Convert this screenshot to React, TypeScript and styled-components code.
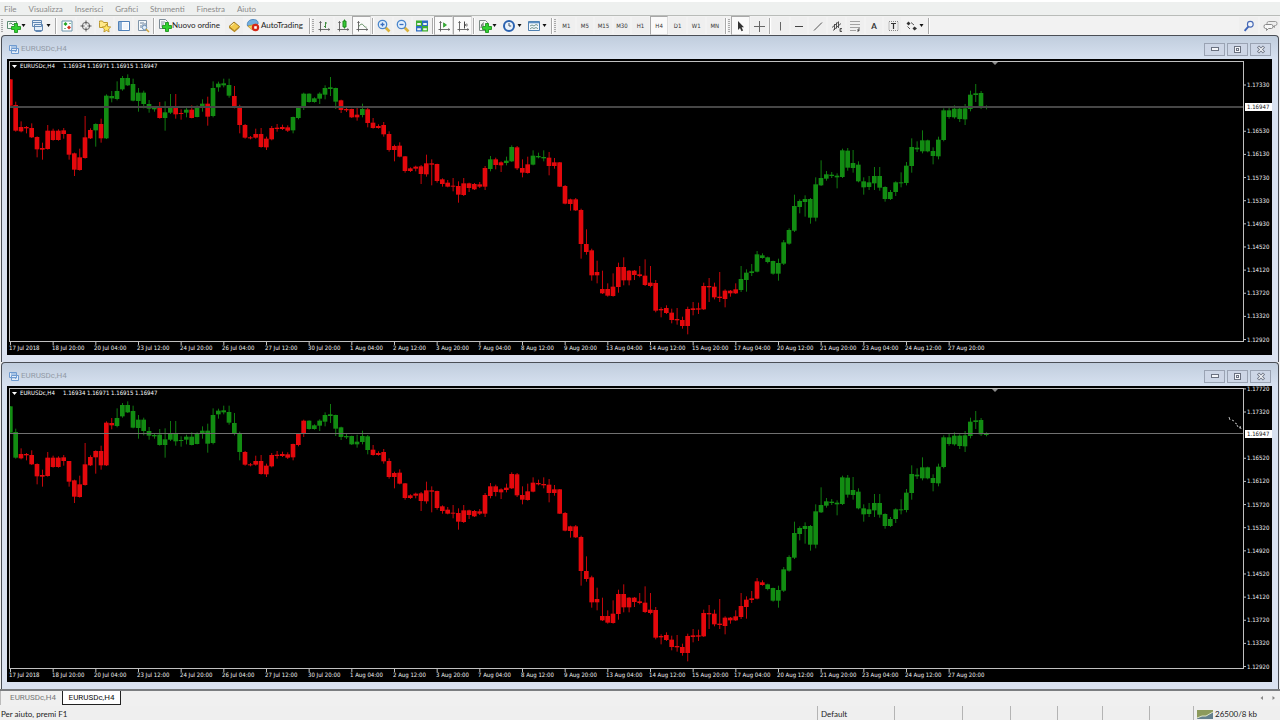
import React from "react";
import styled, { createGlobalStyle } from "styled-components";

const UI = '"Lato", "Noto Sans", sans-serif';
const TITLE = '"Roboto", "Noto Sans", sans-serif';
const CHART = '"DejaVu Sans Condensed", "Noto Sans", sans-serif';
const RED = "#e4080c";
const GREEN = "#128c12";

const Global = createGlobalStyle`
  * { box-sizing: border-box; }
  body { margin: 0; background: #f0f0f0; font-family: ${UI}; color: #222; }
  button { font-family: inherit; color: inherit; cursor: default; }
`;

const Terminal = styled.div`
  display: flex;
  flex-direction: column;
  min-height: 100vh;
`;

const MenuBar = styled.nav`
  display: flex;
  align-items: center;
  height: 16px;
  padding-left: 4px;
  gap: 12px;
  border-top: 2px solid #fff;
  border-bottom: 1px solid #b9bcb9;
  background: #eef0ef;
`;

const MenuItem = styled.button`
  border: 0;
  padding: 0;
  background: none;
  font-size: 8px;
  line-height: 12px;
  color: #8a8a8a;
`;

const Toolbar = styled.div`
  display: flex;
  align-items: stretch;
  height: 19px;
  background: #f2f2f2;
`;

const Group = styled.div<{ $w: number }>`
  display: flex;
  width: ${(p) => p.$w}px;
`;

const Tool = styled.button<{ $on?: boolean }>`
  display: flex;
  flex: 1 1 0;
  align-items: center;
  justify-content: center;
  min-width: 0;
  padding: 0;
  border: 1px solid transparent;
  ${(p) => p.$on && "border-color: #a8a8a8 #ddd #ddd #a8a8a8; background: #fafafa;"}
  background-clip: padding-box;
  font: 6px/10px ${CHART};
  color: #333;
`;

const LetterTool = styled(Tool)`
  font: bold 8px/10px ${UI};
`;

const DropTool = styled.button`
  display: flex;
  align-items: center;
  width: 25px;
  padding: 0 3px 0 1px;
  border: 0;
  background: none;
`;

const TextTool = styled.button<{ $w: number }>`
  display: flex;
  align-items: center;
  width: ${(p) => p.$w}px;
  padding: 0 0 1px 1px;
  border: 0;
  background: none;
  font-size: 8px;
  color: #1c1c1c;
  white-space: nowrap;
`;

const Sep = styled.i`
  width: 3px;
  border-left: 1px solid transparent;
  border-right: 1px solid #fff;
  background: #a9a9a9;
  background-clip: padding-box;
  margin: 2px 0 1px;
`;

const Grip = styled.i`
  width: 4px;
  margin: 3px 0 2px;
  border-left: 1px solid transparent;
  border-right: 1px solid transparent;
  background: repeating-linear-gradient(#aaa 0 1px, #eee 1px 2px);
  background-clip: padding-box;
`;

const Spacer = styled.div`
  flex: 1;
`;

const Svg = styled.svg`
  display: block;
  flex: none;
  overflow: visible;
`;

const ChartWindow = styled.section`
  margin: 0 1px;
  height: 327px;
  padding: 0 6px 7px 5px;
  border: 1px solid #4a4e55;
  border-bottom: 0;
  border-radius: 4px 4px 0 0;
  background: linear-gradient(#c0cddd, #d7e1f0 23px, #dbe2f0);
`;

const TitleBar = styled.header`
  display: flex;
  align-items: center;
  height: 23px;
  gap: 2px;
  padding: 3px 1px 0 1px;
`;

const Title = styled.h2`
  flex: 1;
  margin: 0;
  font: 8px/12px ${TITLE};
  color: #929aa6;
`;

const WinButton = styled.button`
  display: flex;
  align-items: center;
  justify-content: center;
  width: 21px;
  height: 13px;
  padding: 0;
  border: 1px solid #9aa3b3;
  background: #cdd6e6;
`;

const ChartArea = styled.div`
  display: grid;
  grid-template-columns: minmax(0, 1fr) 28px;
  height: 296px;
  padding: 2px 0 0 2px;
  background: #000;
`;

const Plot = styled.div`
  position: relative;
  height: 281px;
  border: 1px solid #c0c0c0;
  overflow: hidden;
`;

const PriceLine = styled.div<{ $soft: boolean }>`
  position: absolute;
  left: 0;
  right: 0;
  top: 44px;
  height: ${(p) => (p.$soft ? 2 : 1)}px;
  background: ${(p) => (p.$soft ? "#464646" : "#707070")};
`;

const Caption = styled.div`
  position: absolute;
  left: 2px;
  top: 0;
  display: flex;
  align-items: center;
  gap: 3px;
  height: 8px;
  font: 6px/8px ${CHART};
  color: #fff;
`;

const Symbol = styled.span`
  width: 40px;
`;

const ShiftMark = styled.i`
  position: absolute;
  left: 982px;
  top: 0;
  border: 3px solid transparent;
  border-top-color: #8c8c8c;
  border-bottom: 0;
`;

const Pointer = styled.svg`
  position: absolute;
  right: 0;
  top: 26px;
`;

const Tabs = styled.div`
  display: flex;
  align-items: flex-start;
  height: 17px;
  border-top: 2px solid #7b7d80;
  background: #f0f0f0;
`;

const Tab = styled.button<{ $on?: boolean }>`
  width: ${(p) => (p.$on ? 59 : 62)}px;
  height: 14px;
  padding: ${(p) => (p.$on ? "0" : "0 0 0 3px")};
  border: solid ${(p) => (p.$on ? "#222" : "#bbb")};
  border-width: ${(p) => (p.$on ? "0 1px 1px 1px" : "0 0 0 1px")};
  background: ${(p) => (p.$on ? "#fff" : "transparent")};
  font: 8px/12px ${TITLE};
  color: ${(p) => (p.$on ? "#111" : "#777")};
`;

const TabArrow = styled.button`
  width: 12px;
  height: 13px;
  padding: 0;
  border: 0;
  background: none;
`;

const StatusBar = styled.footer`
  display: flex;
  height: 14px;
  background: #efefef;
  font-size: 8px;
  line-height: 12px;
  color: #222;
`;

const StatusCell = styled.div<{ $w?: number }>`
  display: flex;
  align-items: center;
  gap: 2px;
  padding-top: 2px;
  ${(p) => (p.$w ? `width: ${p.$w}px; border-left: 1px solid #b4b4b4; padding-left: 3px;` : "flex: 1; padding-left: 1px;")}
`;

/* Candles, one per H4 bar: high, body top, body bottom, low, in thirds of a pixel. */
const CANDLES = `58,58,137,137 125,135,212,215 184,201,214,217 198,201,205,220 190,204,232,234 229,231,268,292 248,264,269,299 195,212,267,269
206,212,240,242 208,212,240,242 204,211,222,236 222,222,284,299 278,280,329,348 266,292,330,332 168,232,294,296 205,210,235,237
190,192,211,260 176,192,235,248 103,107,235,237 93,108,115,127 64,93,117,121 48,54,88,92 43,54,76,78 56,72,122,124
84,98,123,155 92,98,132,145 120,132,146,158 138,144,148,155 126,143,174,176 124,157,174,212 102,141,158,162 102,141,163,176
148,159,162,179 143,149,158,172 136,149,174,175 136,139,171,172 118,131,139,155 110,131,170,197 64,84,168,172 65,71,82,95
56,70,76,82 56,75,107,113 78,108,140,145 134,140,195,220 192,195,233,236 228,232,235,238 206,222,233,236 204,222,261,263
230,236,262,270 198,204,238,241 192,203,207,215 194,201,207,210 196,202,212,216 170,171,211,220 140,141,174,178 98,101,141,150
100,101,126,128 112,115,126,128 97,101,116,132 76,84,104,118 51,82,87,108 83,84,125,147 119,121,150,159 140,147,151,156
146,147,172,174 143,164,172,182 131,147,165,172 144,148,189,202 174,188,204,206 193,198,204,206 186,195,223,230 214,222,270,275
254,258,270,304 247,257,290,292 288,289,333,338 322,325,333,336 317,320,326,334 315,319,342,372 284,310,343,350 298,310,314,376
311,312,363,368 355,358,372,380 360,368,380,382 354,377,380,394 364,378,404,428 354,370,405,408 368,370,384,396 369,372,388,390
366,373,380,384 318,324,380,390 288,298,327,334 293,298,315,328 304,307,316,336 290,302,309,316 256,261,304,306 258,262,325,330
298,324,338,352 290,313,339,341 271,287,314,316 278,288,292,295 271,291,295,304 276,293,318,346 294,307,318,326 306,307,380,381
375,378,431,433 416,418,432,452 414,418,451,453 446,450,552,596 508,552,576,584 566,571,646,662 602,636,646,670 632,687,700,702
670,687,707,710 640,680,708,710 608,621,681,698 592,621,661,676 630,632,661,676 630,632,645,660 618,643,648,652 598,647,675,678
618,668,678,682 660,669,752,757 742,747,751,772 736,744,759,762 746,758,780,790 744,777,781,794 770,780,798,806 740,747,798,823
726,745,750,766 728,745,749,762 668,678,748,750 654,678,682,726 668,680,712,718 636,710,714,726 688,692,717,742 690,692,700,710
670,688,700,702 618,657,690,696 628,638,660,695 612,634,639,648 573,583,635,637 580,586,594,596 590,592,606,610 602,603,641,644
596,609,641,662 540,547,611,615 505,510,551,554 404,438,512,516 418,423,441,460 406,417,426,470 414,417,473,491 352,373,473,484
301,354,376,378 333,343,356,362 336,344,348,354 340,347,352,385 266,271,351,354 264,272,323,332 270,309,324,338 304,314,364,367
352,364,382,404 348,367,381,390 321,348,370,390 321,348,383,392 379,381,417,425 390,396,417,420 364,367,396,408 337,367,370,382
306,317,369,376 235,261,318,338 244,263,268,276 211,241,274,280 239,241,274,277 262,273,288,313 230,239,289,298 145,151,240,244
140,151,171,176 136,146,172,176 142,146,177,186 132,145,178,195 92,104,147,154 72,100,105,126 93,99,142,147 136,140,144,148`
  .split(/\s+/)
  .map((c) => c.split(",").map(Number));

type Range = [number, number];
const FAST: Range[] = [[16, 16], [18, 27], [29, 30], [33, 33], [35, 36], [38, 41], [53, 61], [66, 66], [90, 90], [93, 94], [98, 100], [137, 183]];
const SLOW: Range[] = [[0, 1], [20, 43], [56, 67], [142, 183]];

const DATES = ["17 Jul 2018", "18 Jul 20:00", "20 Jul 04:00", "23 Jul 12:00", "24 Jul 20:00", "26 Jul 04:00", "27 Jul 12:00", "30 Jul 20:00", "1 Aug 04:00", "2 Aug 12:00", "3 Aug 20:00", "7 Aug 04:00", "8 Aug 12:00", "9 Aug 20:00", "13 Aug 04:00", "14 Aug 12:00", "15 Aug 20:00", "17 Aug 04:00", "20 Aug 12:00", "21 Aug 20:00", "23 Aug 04:00", "24 Aug 12:00", "27 Aug 20:00"];

const LOWER_PRICES = ["1.16530", "1.16130", "1.15730", "1.15330", "1.14930", "1.14520", "1.14120", "1.13720", "1.13320", "1.12920"];
const LOWER_PRICES_2 = ["1.16520", "1.16120", "1.15720", "1.15320", "1.14920", "1.14520", "1.14120", "1.13720", "1.13320", "1.12920"];

function Candles({ green }: { green: Range[] }) {
  return (
    <Svg width="990" height="279" aria-label="EURUSDc candles">
      <g transform="scale(0.33333) translate(0 -6)">
        {CANDLES.map(([hi, top, bottom, lo], i) => {
          const up = green.some(([a, b]) => i >= a && i <= b);
          const x = 1 + 16 * i;
          return (
            <g key={i} fill={up ? GREEN : RED}>
              <rect x={x - 1} y={hi} width="2.6" height={lo - hi} />
              <rect x={x - 7} y={top} width="14" height={bottom - top} />
            </g>
          );
        })}
      </g>
    </Svg>
  );
}

function PriceAxis({ prices }: { prices: [number, string][] }) {
  return (
    <Svg width="28" height="294" fontFamily={CHART} fontSize="6" fill="#f2f2f2">
      {prices.map(([row, p]) => {
        const y = 24 + row * 23.14;
        return (
          <g key={p}>
            <path d={`M0 ${y}h2`} stroke="#c0c0c0" />
            <text x="3" y={y + 2}>{p}</text>
          </g>
        );
      })}
      <rect x="1" y="42" width="27" height="8" fill="#fff" />
      <text x="3" y="48" fill="#111">1.16947</text>
    </Svg>
  );
}

function Chart({ green, prices, soft, pointer }: { green: Range[]; prices: [number, string][]; soft: boolean; pointer?: boolean }) {
  return (
    <ChartWindow>
      <TitleBar>
        <Svg width="11" height="11" viewBox="0 0 11 11" fill="#e6effa" stroke="#6f9bd0">
          <path d="M1.5 1.5h7v5h-7zM3.5 4.5h7v5h-7z" />
          <path d="M3 3h5M5 7.5l1-1 1 1 2-1" fill="none" />
        </Svg>
        <Title>EURUSDc,H4</Title>
        <WinButton aria-label="Riduci"><Svg width="8" height="4"><rect x=".5" y=".5" width="7" height="3" fill="#f4f6fa" stroke="#6a7180" /></Svg></WinButton>
        <WinButton aria-label="Ingrandisci"><Svg width="7" height="7"><rect x=".5" y=".5" width="6" height="6" fill="#f4f6fa" stroke="#6a7180" /><rect x="2.5" y="2.5" width="2" height="2" fill="none" stroke="#6a7180" /></Svg></WinButton>
        <WinButton aria-label="Chiudi"><Svg width="8" height="7"><path d="M1 .5l6 6M7 .5l-6 6" stroke="#6a7180" strokeWidth="3" /><path d="M1.500 1l5 5M6.500 1l-5 5" stroke="#f4f6fa" strokeWidth="1.200" /></Svg></WinButton>
      </TitleBar>
      <ChartArea>
        <div>
          <Plot>
            <PriceLine $soft={soft} />
            <Candles green={green} />
            <Caption>
              <Svg width="5" height="3"><path d="M0 0h5L2.500 3z" fill="#fff" /></Svg>
              <Symbol>EURUSDc,H4</Symbol>
              <span>1.16934 1.16971 1.16915 1.16947</span>
            </Caption>
            <ShiftMark />
            {pointer && (
              <Pointer width="15" height="15" stroke="#b5b5b5" fill="none"><path d="M1 2l1 3M4 5l2 1M7 8l2 1M9 10l1 2M11 13l2-1M12 11l1 3" /></Pointer>
            )}
          </Plot>
          <Svg width="1000" height="13" fontFamily={CHART} fontSize="6" fill="#f2f2f2">
            {DATES.map((d, k) => (
              <g key={d}>
                <path d={`M${1.5 + (k * 128) / 3} -1v4`} stroke="#c0c0c0" />
                <text x={Math.round((k * 128) / 3)} y="8">{d}</text>
              </g>
            ))}
          </Svg>
        </div>
        <PriceAxis prices={prices} />
      </ChartArea>
    </ChartWindow>
  );
}

const Ico = ({ children, s = 16 }: { children: React.ReactNode; s?: number }) => (
  <Svg width={s} height={s} viewBox="0 0 16 16" fill="none" aria-hidden="true">{children}</Svg>
);
const Caret = () => <Svg width="5" height="3"><path d="M.5 0h4L2.500 3z" fill="#111" /></Svg>;
const Plus = () => <path d="M9.500 5.500h3v3h3v3h-3v3h-3v-3h-3v-3h3z" fill="#2fd12f" stroke="#128a12" strokeWidth=".8" />;
const Axes = () => <path d="M4.500 3.500v10M2.500 11.500h11M3.500 5l1-1.500 1 1.500M12.300 10.500l1.500 1-1.500 1" stroke="#5a5a5a" strokeWidth=".9" />;

const Lens = ({ minus }: { minus?: boolean }) => (
  <Ico>
    <path d="M9.500 9.500l4 4" stroke="#d9b23c" strokeWidth="2.600" />
    <circle cx="6.500" cy="6.500" r="4.200" fill="#e4f1fd" stroke="#4a86cc" strokeWidth="1.300" />
    <path d={minus ? "M4.500 6.500h4" : "M4.500 6.500h4M6.500 4.500v4"} stroke="#3a6fc0" strokeWidth="1.300" />
  </Ico>
);

export default function App() {
  const frames = ["M1", "M5", "M15", "M30", "H1", "H4", "D1", "W1", "MN"];
  const upper: [number, string][] = [[0, "1.17330"], ...LOWER_PRICES.map((p, i): [number, string] => [i + 2, p])];
  const lower: [number, string][] = [[-1, "1.17720"], [0, "1.17320"], ...LOWER_PRICES_2.map((p, i): [number, string] => [i + 2, p])];
  return (
    <Terminal>
      <Global />
      <MenuBar>
        {["File", "Visualizza", "Inserisci", "Grafici", "Strumenti", "Finestra", "Aiuto"].map((m) => <MenuItem key={m}>{m}</MenuItem>)}
      </MenuBar>
      <Toolbar>
        <Grip />
        <DropTool aria-label="Nuovo grafico">
          <Ico><path d="M2.500 3.500h9v7h-9z" fill="#f4faf4" stroke="#5e8c74" /><path d="M4 6l2-1 2 2 2-2" stroke="#5e8c74" /><Plus /></Ico><Caret />
        </DropTool>
        <DropTool aria-label="Profili">
          <Ico><path d="M2.500 2.500h9v6h-9zM4.500 6.500h8v6h-8z" fill="#e6eff9" stroke="#6288b3" /><path d="M3 4.500h8M5.500 13.500h6M6 8.500h5" stroke="#6288b3" /></Ico><Caret />
        </DropTool>
        <Sep />
        <Group $w={95}>
          <Tool aria-label="Market"><Ico><path d="M3 3h10v10H3z" fill="#fff" stroke="#6c96ad" /><path d="M4.500 6l2-2 2 2-2 2z" fill="#22a522" /><path d="M8 9.500l2-2 2 2-2 2z" fill="#d43020" /><path d="M5 10.500h2M10 5.500h2" stroke="#7cba94" /></Ico></Tool>
          <Tool aria-label="Finestra dati"><Ico><circle cx="8" cy="8" r="3.700" stroke="#666" /><path d="M8 2.500v4M8 9.500v4M2.500 8h4M9.500 8h4" stroke="#555" /></Ico></Tool>
          <Tool aria-label="Navigatore"><Ico><path d="M2.500 4.500V3h3l1 1.500h4v5h-8z" fill="#ffe98a" stroke="#bd9a30" /><path d="M9.500 6l1.300 2.600 2.900.4-2.100 2 .5 2.900-2.600-1.400-2.600 1.400.5-2.900-2.100-2 2.900-.4z" fill="#ffe566" stroke="#b28a20" strokeWidth=".8" /></Ico></Tool>
          <Tool aria-label="Terminale"><Ico><path d="M2.500 3.500h11v9h-11z" fill="#fdfeff" stroke="#4f80b8" /><path d="M3 4h3v8H3z" fill="#8fb2d8" /><path d="M7 6h5M7 8h5M7 10h5" stroke="#dde6f0" strokeWidth=".7" /></Ico></Tool>
          <Tool aria-label="Strategy Tester"><Ico><path d="M3.500 2.500h8v10h-8z" fill="#f4f8fb" stroke="#7f95aa" /><path d="M5 5h2M8 4v4M6 7v3M10 5v3" stroke="#68809a" /><circle cx="9.500" cy="9.500" r="2.200" fill="#e3effa" stroke="#6d92b8" /><path d="M11 11l3 3" stroke="#cfa53a" strokeWidth="1.500" /></Ico></Tool>
        </Group>
        <Sep />
        <TextTool $w={69}>
          <Ico><path d="M3.500 2.500h6l2 2v7h-8z" fill="#f5f8fa" stroke="#7d8b96" /><path d="M5 5h4M5 7h3M5 9h2" stroke="#8b98a3" /><Plus /></Ico>Nuovo ordine
        </TextTool>
        <Group $w={20}>
          <Tool aria-label="MetaEditor"><Ico><path d="M3 8.500L8 4l5.500 4.500-5 4.500z" fill="#f3ca4c" stroke="#94701c" strokeWidth=".9" /><path d="M3 8.500v1.500l5.500 4.200 5-4.400V8.500l-5 4.200z" fill="#b88a20" /><path d="M5 8L8 5.500" stroke="#fff3b8" /></Ico></Tool>
        </Group>
        <TextTool $w={64}>
          <Ico><path d="M2.500 9c-1-4 2-6.500 5.500-6.500S13.500 4 13 7c-3 1.500-7 2.500-10.500 2z" fill="#72afe0" stroke="#3d7ab5" strokeWidth=".8" /><path d="M3 9c2 3 5 5 9 3l-.5-5z" fill="#f1cf5e" stroke="#b98e2a" strokeWidth=".7" /><circle cx="10.500" cy="10.500" r="3.700" fill="#d42818" /><path d="M9.200 9.200h2.600v2.600H9.200z" fill="#fff" /></Ico>AutoTrading
        </TextTool>
        <Sep />
        <Grip />
        <Group $w={56}>
          <Tool aria-label="Barre"><Ico><Axes /><path d="M9.500 4v6M8 8.500h1.500M9.500 5H11" stroke="#3f8a3f" /></Ico></Tool>
          <Tool aria-label="Candele"><Ico><Axes /><path d="M9.500 1.500v9" stroke="#1c8a1c" /><path d="M8 3h3v6H8z" fill="#35c835" stroke="#1c8a1c" /></Ico></Tool>
          <Tool aria-label="Linea" $on><Ico><Axes /><path d="M5 8.500c1.500-3 3.500-3 5-.5.8 1.200 1.500 1.200 2.500 1.200" stroke="#5a8a5a" /></Ico></Tool>
        </Group>
        <Sep />
        <Group $w={57}>
          <Tool aria-label="Ingrandisci"><Lens /></Tool>
          <Tool aria-label="Rimpicciolisci"><Lens minus /></Tool>
          <Tool aria-label="Affianca"><Ico><path d="M2 2.500h6v5.500H2zM8 8h6v5.500H8z" fill="#3fae32" /><path d="M8 2.500h6V8H8zM2 8h6v5.500H2z" fill="#2c6cc4" /><path d="M3.200 5h3.600v2H3.200zM9.200 5h3.600v2H9.200zM3.200 10.300h3.600v2H3.200zM9.200 10.300h3.600v2H9.200z" fill="#eef6ee" /></Ico></Tool>
        </Group>
        <Sep />
        <Group $w={38}>
          <Tool aria-label="Scorrimento" $on><Ico><Axes /><path d="M7.500 4.800v4.400L10.500 7z" fill="#31b431" stroke="#1c8a1c" strokeWidth=".6" /></Ico></Tool>
          <Tool aria-label="Spostamento" $on><Ico><Axes /><path d="M9.500 3.500v7" stroke="#444" strokeWidth="1" /><path d="M13 7h-3M11.700 5.500L10.200 7l1.500 1.500" stroke="#666" strokeWidth=".9" /></Ico></Tool>
        </Group>
        <Sep />
        <DropTool aria-label="Indicatori"><Ico><path d="M3.500 2.500h6l2 2v8h-8z" fill="#f5f8f5" stroke="#7d8b86" /><path d="M5 10c1-5 2-5 3-5M5.500 7h2.500" stroke="#55605a" /><Plus /></Ico><Caret /></DropTool>
        <DropTool aria-label="Periodi"><Ico><circle cx="8" cy="8" r="5" fill="#eaf3fc" stroke="#2a62b0" strokeWidth="2" /><path d="M8 5v3h2.200" stroke="#456" /></Ico><Caret /></DropTool>
        <DropTool aria-label="Modelli"><Ico><path d="M2.500 3.500h11v9h-11z" fill="#f3f8fc" stroke="#4f80b0" /><path d="M3 4.500h10" stroke="#5c8fc2" strokeWidth="1.600" /><path d="M4 8l2-1 2 1 2-1.500 2 1M4 11l2-1.500 2 1 2-1 2 1.200" stroke="#66897f" strokeWidth=".9" /></Ico><Caret /></DropTool>
        <Sep />
        <Grip />
        <Group $w={167}>{frames.map((f) => <Tool key={f} $on={f === "H4"}>{f}</Tool>)}</Group>
        <Sep />
        <Grip />
        <Group $w={37}>
          <Tool aria-label="Cursore" $on><Ico><path d="M6 3v9l2-2 1.500 3.200 1.600-.8L9.600 9.300H12z" fill="#333" /></Ico></Tool>
          <Tool aria-label="Mirino"><Ico><path d="M8.500 3v11M3 8.500h11" stroke="#666" /></Ico></Tool>
        </Group>
        <Sep />
        <Group $w={131}>
          <Tool aria-label="Linea verticale"><Ico><path d="M8.500 4v8.500" stroke="#666" /></Ico></Tool>
          <Tool aria-label="Linea orizzontale"><Ico><path d="M4 8.500h8" stroke="#444" /></Ico></Tool>
          <Tool aria-label="Linea di tendenza"><Ico><path d="M4 12.500l8-8" stroke="#555" /></Ico></Tool>
          <Tool aria-label="Canale"><Ico><path d="M3 9.500l7-6M4 12.500l8-7M5.500 6v6M7.500 4.500v6M9.500 4v6" stroke="#444" strokeWidth=".9" /><path d="M13 10.500h-2v3h2M11 12h1.500" stroke="#333" strokeWidth=".8" /></Ico></Tool>
          <Tool aria-label="Fibonacci"><Ico><path d="M3.500 3.500h9M3.500 6.500h9M3.500 9.500h9M3.500 12.500h6" stroke="#555" strokeDasharray="1 1" /><path d="M11 14v-3h2M11 12.500h1.500" stroke="#333" strokeWidth=".8" /></Ico></Tool>
          <LetterTool aria-label="Testo">A</LetterTool>
          <Tool aria-label="Etichetta"><Ico><rect x="4" y="3.500" width="9" height="9" stroke="#888" strokeDasharray="1 1" /><path d="M6 5.500h5M8.500 5.500V11" stroke="#333" strokeWidth="1.200" /></Ico></Tool>
        </Group>
        <DropTool aria-label="Frecce"><Ico><path d="M5.500 3.500L7.500 5.500 5.500 7.500 3.500 5.500zM11.500 8.500l2.500 2L11.500 12.500 9.500 10.500z" fill="#333" /><path d="M4.500 8.500l2.500 2.500M8 4.500l3 2.500" stroke="#555" /></Ico><Caret /></DropTool>
        <Sep />
        <Spacer />
        <Group $w={42}>
          <Tool aria-label="Cerca"><Ico s={14}><path d="M7.500 8.500L3 13.500" stroke="#3d63b8" strokeWidth="2.200" /><circle cx="9.500" cy="6" r="3.300" fill="#f2f6fc" stroke="#4769b5" strokeWidth="1.300" /></Ico></Tool>
          <Tool aria-label="Messaggi"><Ico><path d="M6.500 3.500h7q1.500 0 1.500 2t-1.500 2h-1v2l-2-2h-4q-1.500 0-1.500-2t1.500-2z" fill="#eee" stroke="#999" /><path d="M3.500 6.500h6q1.500 0 1.500 2t-1.500 2h-3l-2 2v-2h-1Q2 10.500 2 8.500t1.500-2z" fill="#f8f8f8" stroke="#888" /></Ico></Tool>
        </Group>
      </Toolbar>
      <main>
        <Chart green={FAST} prices={upper} soft />
        <Chart green={SLOW} prices={lower} soft={false} pointer />
      </main>
      <Tabs>
        <Tab>EURUSDc,H4</Tab>
        <Tab $on>EURUSDc,H4</Tab>
        <Spacer />
        <TabArrow aria-label="Precedente"><Svg width="12" height="6"><path d="M7 1L4.500 3 7 5z" fill="#888" /></Svg></TabArrow>
        <TabArrow aria-label="Successivo"><Svg width="12" height="6"><path d="M4.500 1L7 3 4.500 5z" fill="#888" /></Svg></TabArrow>
      </Tabs>
      <StatusBar>
        <StatusCell>Per aiuto, premi F1</StatusCell>
        <StatusCell $w={77}>Default</StatusCell>
        <StatusCell $w={68} />
        <StatusCell $w={48} />
        <StatusCell $w={47} />
        <StatusCell $w={45} />
        <StatusCell $w={47} />
        <StatusCell $w={44} />
        <StatusCell $w={87}>
          <Svg width="16" height="9"><path d="M0 0h16v9H0z" fill="#8c9a5c" /><path d="M0 9V8l5-2 4 0 7-4v7z" fill="#64808e" /><path d="M0 8l5-2h4l7-4" stroke="#dfe6c8" fill="none" /></Svg>
          26500/8 kb
        </StatusCell>
      </StatusBar>
    </Terminal>
  );
}
